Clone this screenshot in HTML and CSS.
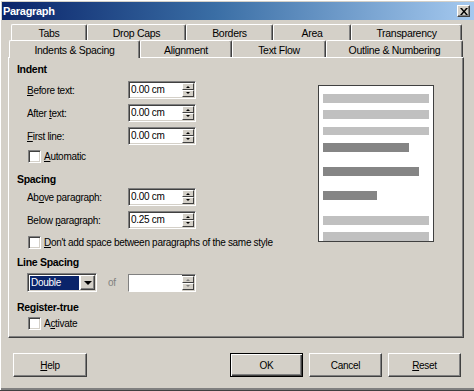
FILE: index.html
```html
<!DOCTYPE html>
<html>
<head>
<meta charset="utf-8">
<title>Paragraph</title>
<link rel="stylesheet" href="styles.css">
</head>
<body>
<div class="window">
  <div class="titlebar">
    <span class="title">Paragraph</span>
    <span class="close"><svg width="8" height="7" viewBox="0 0 8 7"><path d="M0 0h2l2 2.5L6 0h2L5 3.5 8 7H6L4 4.5 2 7H0l3-3.5z" fill="#000"/></svg></span>
  </div>
  <div class="tabs">
    <div class="tabrow row1">
      <div class="tab t-tabs">Tabs</div>
      <div class="tab t-drop">Drop Caps</div>
      <div class="tab t-borders">Borders</div>
      <div class="tab t-area">Area</div>
      <div class="tab t-transp">Transparency</div>
    </div>
    <div class="tabrow row2">
      <div class="tab active t-indents">Indents &amp; Spacing</div>
      <div class="tab t-align">Alignment</div>
      <div class="tab t-flow">Text Flow</div>
      <div class="tab t-outline">Outline &amp; Numbering</div>
    </div>
  </div>
  <div class="panel">
    <div class="left">
      <div class="heading">Indent</div>
      <div class="field f-first"><span class="label"><u>B</u>efore text:</span><span class="spin"><span class="value">0.00 cm</span><span class="btns"><span class="sb up"></span><span class="sb down"></span></span></span></div>
      <div class="field"><span class="label">After <u>t</u>ext:</span><span class="spin"><span class="value">0.00 cm</span><span class="btns"><span class="sb up"></span><span class="sb down"></span></span></span></div>
      <div class="field"><span class="label"><u>F</u>irst line:</span><span class="spin"><span class="value">0.00 cm</span><span class="btns"><span class="sb up"></span><span class="sb down"></span></span></span></div>
      <div class="check c-auto"><span class="box"></span><span><u>A</u>utomatic</span></div>

      <div class="heading h-spacing">Spacing</div>
      <div class="field f-first2"><span class="label">Ab<u>o</u>ve paragraph:</span><span class="spin"><span class="value">0.00 cm</span><span class="btns"><span class="sb up"></span><span class="sb down"></span></span></span></div>
      <div class="field"><span class="label">Below <u>p</u>aragraph:</span><span class="spin"><span class="value">0.25 cm</span><span class="btns"><span class="sb up"></span><span class="sb down"></span></span></span></div>
      <div class="check c-dont"><span class="box"></span><span><u>D</u>on't add space between paragraphs of the same style</span></div>

      <div class="heading h-line">Line Spacing</div>
      <div class="linerow">
        <span class="combo"><span class="sel">Double</span><span class="arrow"></span></span>
        <span class="of">of</span>
        <span class="spin disabled"><span class="value"></span><span class="btns"><span class="sb up"></span><span class="sb down"></span></span></span>
      </div>

      <div class="heading h-reg">Register-true</div>
      <div class="check c-act"><span class="box"></span><span>A<u>c</u>tivate</span></div>
    </div>
    <div class="preview">
      <div class="bar light"></div>
      <div class="bar light g8"></div>
      <div class="bar light h8"></div>
      <div class="bar dark d1 g9"></div>
      <div class="bar dark d2 g16"></div>
      <div class="bar dark d3 g16"></div>
      <div class="bar light g16b"></div>
      <div class="bar light g8"></div>
    </div>
  </div>
  <div class="buttons">
    <div class="btn help"><span><u>H</u>elp</span></div>
    <div class="btn default">OK</div>
    <div class="btn">Cancel</div>
    <div class="btn"><span><u>R</u>eset</span></div>
  </div>
</div>
</body>
</html>
```
FILE: styles.css
```css
* { box-sizing: border-box; }
html, body { margin: 0; padding: 0; }
body {
  background: #d4d0c8;
  font-family: "Liberation Sans", Arial, sans-serif;
  font-size: 10px;
  letter-spacing: -0.3px;
  color: #000;
  overflow: hidden;
}
u { text-decoration: underline; text-underline-offset: 1px; }

.window {
  width: 476px;
  height: 391px;
  background: #d4d0c8;
  padding: 2px 0 0 2px;
  border-bottom: 1px solid #404040;
  box-shadow: inset 1px 1px #fff, inset 0 -2px #808080;
  overflow: hidden;
}

.titlebar {
  height: 18px;
  background: linear-gradient(to right, #0a246a 0%, #3a6ea5 45%, #a6caf0 100%);
  display: flex;
  align-items: center;
  justify-content: space-between;
  padding: 0 6px 0 1px;
  color: #fff;
  font-weight: bold;
  font-size: 11px;
}
.close {
  width: 13px;
  height: 12px;
  background: #d4d0c8;
  border: 1px solid;
  border-color: #fff #404040 #404040 #fff;
  box-shadow: inset -1px -1px #808080;
  display: flex;
  align-items: center;
  justify-content: center;
}

.tabs { margin-top: 4px; }
.tabrow { display: flex; }
.row1 { height: 16px; margin-left: 9px; }
.row2 { height: 17px; margin-left: 7px; position: relative; z-index: 2; }
.tab {
  background: #d4d0c8;
  border-top: 1px solid #fff;
  border-left: 1px solid #fff;
  border-right: 1px solid #404040;
  box-shadow: inset -1px 0 #808080;
  border-radius: 2px 2px 0 0;
  display: flex;
  align-items: center;
  justify-content: center;
  white-space: nowrap;
  font-size: 10.5px;
}
.t-tabs { width: 76px; }
.t-drop { width: 99px; }
.t-borders { width: 87px; }
.t-area { width: 78px; }
.t-transp { width: 111px; }
.t-indents { width: 131px; }
.t-align { width: 92px; }
.t-flow { width: 94px; }
.t-outline { width: 137px; }
.row2 .tab { padding-top: 1px; }
.tab.active { height: 18px; }

.panel {
  margin-left: 6px;
  width: 456px;
  height: 281px;
  border: 1px solid;
  border-color: #fff #404040 #404040 #fff;
  box-shadow: inset -1px -1px #808080;
  display: flex;
  position: relative;
  z-index: 1;
}

.left {
  flex: 0 0 280px;
  padding: 4px 0 0 8px;
  display: flex;
  flex-direction: column;
}
.heading {
  font-weight: bold;
  font-size: 10.5px;
  height: 14px;
  line-height: 14px;
}
.h-spacing { margin-top: 9px; }
.h-line { margin-top: 6px; }
.h-reg { margin-top: 8px; }

.field {
  display: flex;
  align-items: center;
  height: 18px;
  margin-left: 10px;
  margin-top: 5px;
}
.f-first { margin-top: 5px; }
.f-first2 { margin-top: 2px; }
.label { width: 101px; white-space: nowrap; }

.spin {
  width: 68px;
  height: 18px;
  display: flex;
  background: #fff;
  border: 1px solid;
  border-color: #808080 #fff #fff #808080;
  box-shadow: inset 1px 1px #404040, inset -1px -1px #d4d0c8;
}
.spin .value {
  flex: 1;
  padding-left: 2px;
  line-height: 16px;
}
.spin .btns {
  width: 12px;
  display: flex;
  flex-direction: column;
  margin: 1px 1px 1px 0;
}
.sb {
  flex: 1;
  background: #d4d0c8;
  border: 1px solid;
  border-color: #fff #404040 #404040 #fff;
  position: relative;
}
.sb::after {
  content: "";
  position: absolute;
  left: 3px;
  top: 2px;
  border-left: 2px solid transparent;
  border-right: 2px solid transparent;
}
.sb.up::after { border-bottom: 2px solid #000; }
.sb.down::after { border-top: 2px solid #000; top: 1px; }
.disabled .sb.up::after { border-bottom-color: #808080; }
.disabled .sb.down::after { border-top-color: #808080; }
.disabled .value { background: #fff; }

.check {
  display: flex;
  align-items: center;
  height: 13px;
  margin-left: 11px;
  white-space: nowrap;
}
.c-auto { margin-top: 5px; }
.c-dont { margin-top: 7px; }
.c-act { margin-top: 3px; }
.box {
  width: 13px;
  height: 13px;
  flex: 0 0 13px;
  background: #fff;
  border: 1px solid;
  border-color: #808080 #fff #fff #808080;
  box-shadow: inset 1px 1px #404040, inset -1px -1px #d4d0c8;
  margin-right: 3px;
}

.linerow {
  display: flex;
  align-items: center;
  margin-left: 10px;
  margin-top: 4px;
  height: 19px;
}
.combo {
  width: 70px;
  height: 19px;
  display: flex;
  background: #fff;
  border: 1px solid;
  border-color: #808080 #fff #fff #808080;
  box-shadow: inset 1px 1px #404040, inset -1px -1px #d4d0c8;
  padding: 2px 1px 1px 2px;
}
.combo .sel {
  flex: 1;
  background: #0a246a;
  color: #fff;
  line-height: 13px;
  padding-left: 1px;
  margin-right: 1px;
}
.combo .arrow {
  width: 15px;
  margin-top: -1px;
  background: #d4d0c8;
  border: 1px solid;
  border-color: #fff #404040 #404040 #fff;
  box-shadow: inset -1px -1px #808080;
  position: relative;
}
.combo .arrow::after {
  content: "";
  position: absolute;
  left: 3px;
  top: 5px;
  border-left: 4px solid transparent;
  border-right: 4px solid transparent;
  border-top: 4px solid #000;
}
.of {
  color: #808080;
  margin-left: 11px;
  width: 20px;
}

.preview {
  margin: 27px 29px 0 auto;
  width: 116px;
  height: 157px;
  background: #fff;
  border: 1px solid #404040;
  padding: 8px 4px 0 4px;
  overflow: hidden;
  display: flex;
  flex-direction: column;
  align-items: flex-start;
}
.bar { height: 9px; width: 106px; flex: 0 0 auto; }
.light { background: #c0c0c0; }
.dark { background: #858585; }
.d1 { width: 86px; }
.d2 { width: 96px; }
.d3 { width: 54px; }
.g8 { margin-top: 7px; }
.h8 { margin-top: 8px; height: 8px; }
.g9 { margin-top: 8px; }
.g16 { margin-top: 15px; }
.g16b { margin-top: 16px; }

.buttons {
  display: flex;
  margin-top: 15px;
  padding-left: 11px;
}
.btn {
  width: 73px;
  height: 24px;
  border: 1px solid;
  border-color: #fff #404040 #404040 #fff;
  box-shadow: inset -1px -1px #808080;
  display: flex;
  align-items: center;
  justify-content: center;
  margin-right: 6px;
}
.btn.help { width: 74px; margin-right: 143px; }
.btn.default {
  border-color: #000;
  box-shadow: inset 1px 1px #fff, inset -1px -1px #404040, inset -2px -2px #808080;
}
```
